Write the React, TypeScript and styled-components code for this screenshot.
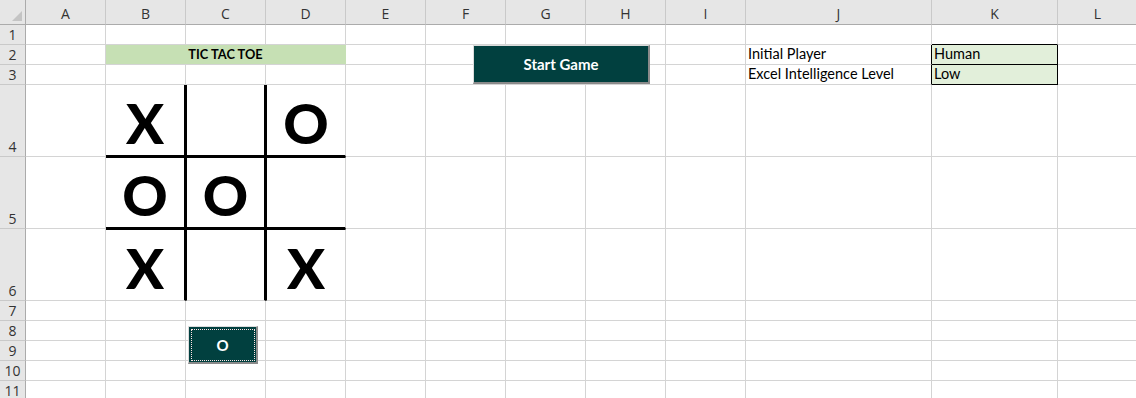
import React from 'react';
import styled, { createGlobalStyle } from 'styled-components';

const GRID = '#d4d4d4';
const HEAD_BG = '#e6e6e6';
const HEAD_LINE = '#ababab';
const TEAL = '#01403f';

const GlobalStyle = createGlobalStyle`
  html, body {
    margin: 0;
    padding: 0;
    background: #fff;
    overflow: hidden;
  }
  body {
    font-family: Lato, 'Open Sans', Arial, sans-serif;
  }
`;

const COLS = ['A', 'B', 'C', 'D', 'E', 'F', 'G', 'H', 'I', 'J', 'K', 'L'];
const ROWS = [1, 2, 3, 4, 5, 6, 7, 8, 9, 10, 11];

const Sheet = styled.div`
  position: relative;
  display: grid;
  grid-template-columns: 26px repeat(9, 80px) 186px 126px 80px;
  grid-template-rows: 25px repeat(3, 20px) repeat(3, 72px) repeat(5, 20px);
  width: 1136px;
  height: 398px;
  overflow: hidden;
`;

const Corner = styled.div`
  box-sizing: border-box;
  background: ${HEAD_BG};
  border-right: 1px solid ${HEAD_LINE};
  border-bottom: 1px solid ${HEAD_LINE};
  display: flex;
  align-items: flex-end;
  justify-content: flex-end;
  padding: 0 3px 3px 0;
`;

const ColHeader = styled.div`
  box-sizing: border-box;
  background: ${HEAD_BG};
  border-right: 1px solid #c9c9c9;
  border-bottom: 1px solid ${HEAD_LINE};
  display: flex;
  align-items: center;
  justify-content: center;
  padding-top: 2px;
  font-family: 'Open Sans', 'Noto Sans', sans-serif;
  font-size: 14px;
  color: #333;
`;

const RowHeader = styled.div`
  box-sizing: border-box;
  background: ${HEAD_BG};
  border-right: 1px solid ${HEAD_LINE};
  border-bottom: 1px solid #c9c9c9;
  display: flex;
  align-items: flex-end;
  justify-content: center;
  line-height: 18px;
  font-family: 'Open Sans', 'Noto Sans', sans-serif;
  font-size: 14px;
  color: #333;
`;

type CellProps = {
  $right?: string;
  $bottom?: string;
  $left?: string;
  $top?: string;
  $bg?: string;
  $align?: 'flex-start' | 'center';
  $bold?: boolean;
  $size?: number;
  $span?: number;
};

const Cell = styled.div<CellProps>`
  box-sizing: border-box;
  grid-column: span ${p => p.$span ?? 1};
  display: flex;
  align-items: flex-end;
  justify-content: ${p => p.$align ?? 'flex-start'};
  padding: 0 2px 1px 2px;
  background: ${p => p.$bg ?? '#fff'};
  border-right: ${p => p.$right ?? `1px solid ${GRID}`};
  border-bottom: ${p => p.$bottom ?? `1px solid ${GRID}`};
  border-left: ${p => p.$left ?? 'none'};
  border-top: ${p => p.$top ?? 'none'};
  font-size: ${p => p.$size ?? 14.5}px;
  line-height: 18px;
  font-weight: ${p => (p.$bold ? 700 : 400)};
  color: #000;
  white-space: nowrap;
`;

const Square = styled(Cell)`
  justify-content: center;
  padding: 0 0 4px 0;
  font-size: 56px;
  line-height: 56px;
  font-weight: 900;
`;

const SheetButton = styled.div<{ $focused?: boolean }>`
  position: absolute;
  box-sizing: border-box;
  display: flex;
  align-items: center;
  justify-content: center;
  background: ${TEAL};
  border-top: 1px solid #dcdcdc;
  border-left: 1px solid #dcdcdc;
  border-right: 2px solid #8a8a8a;
  border-bottom: 2px solid #8a8a8a;
  color: #fff;
  font-weight: 700;
  font-size: 15px;
  outline: ${p => (p.$focused ? '1px dotted #ffe6e6' : 'none')};
  outline-offset: -4px;
`;

const BOARD: Record<string, string> = {
  '4B': 'X',
  '4D': 'O',
  '5B': 'O',
  '5C': 'O',
  '6B': 'X',
  '6D': 'X',
};

const THICK = '2px solid #000';
const THIN_B = '1px solid #000';

function renderCell(row: number, col: string, ci: number) {
  const key = `${row}${col}`;

  // tic tac toe board: B4:D6
  if (row >= 4 && row <= 6 && ci >= 1 && ci <= 3) {
    return (
      <Square
        key={key}
        $right={ci < 3 ? THICK : undefined}
        $left={ci > 1 ? THIN_B : undefined}
        $bottom={row < 6 ? THICK : undefined}
        $top={row > 4 ? THIN_B : undefined}
      >
        {BOARD[key] ?? ''}
      </Square>
    );
  }

  if (row === 2 && ci === 1) {
    return (
      <Cell key={key} $span={3} $bg="#c6e0b4" $right="1px solid #c6e0b4" $align="center" $bold $size={12.8}>
        TIC TAC TOE
      </Cell>
    );
  }
  if (row === 2 && (ci === 2 || ci === 3)) return null;

  // settings block
  if (row === 1 && col === 'K') return <Cell key={key} $bottom={THIN_B} />;
  if ((row === 2 || row === 3) && col === 'J') {
    return (
      <Cell key={key} $right={THIN_B}>
        {row === 2 ? 'Initial Player' : 'Excel Intelligence Level'}
      </Cell>
    );
  }
  if ((row === 2 || row === 3) && col === 'K') {
    return (
      <Cell key={key} $bg="#e2efda" $right={THIN_B} $bottom={THIN_B}>
        {row === 2 ? 'Human' : 'Low'}
      </Cell>
    );
  }

  return <Cell key={key} />;
}

export default function App() {
  return (
    <>
      <GlobalStyle />
      <Sheet>
        <Corner>
          <svg width="10" height="10" viewBox="0 0 10 10">
            <polygon points="0,10 10,10 10,0" fill="#c4c4c4" />
          </svg>
        </Corner>
        {COLS.map(c => (
          <ColHeader key={c}>{c}</ColHeader>
        ))}
        {ROWS.map(r => (
          <React.Fragment key={r}>
            <RowHeader>{r}</RowHeader>
            {COLS.map((c, i) => renderCell(r, c, i))}
          </React.Fragment>
        ))}

        <SheetButton style={{ left: 473, top: 45, width: 177, height: 39 }}>Start Game</SheetButton>
        <SheetButton $focused style={{ left: 188, top: 326, width: 70, height: 38 }}>
          O
        </SheetButton>
      </Sheet>
    </>
  );
}
